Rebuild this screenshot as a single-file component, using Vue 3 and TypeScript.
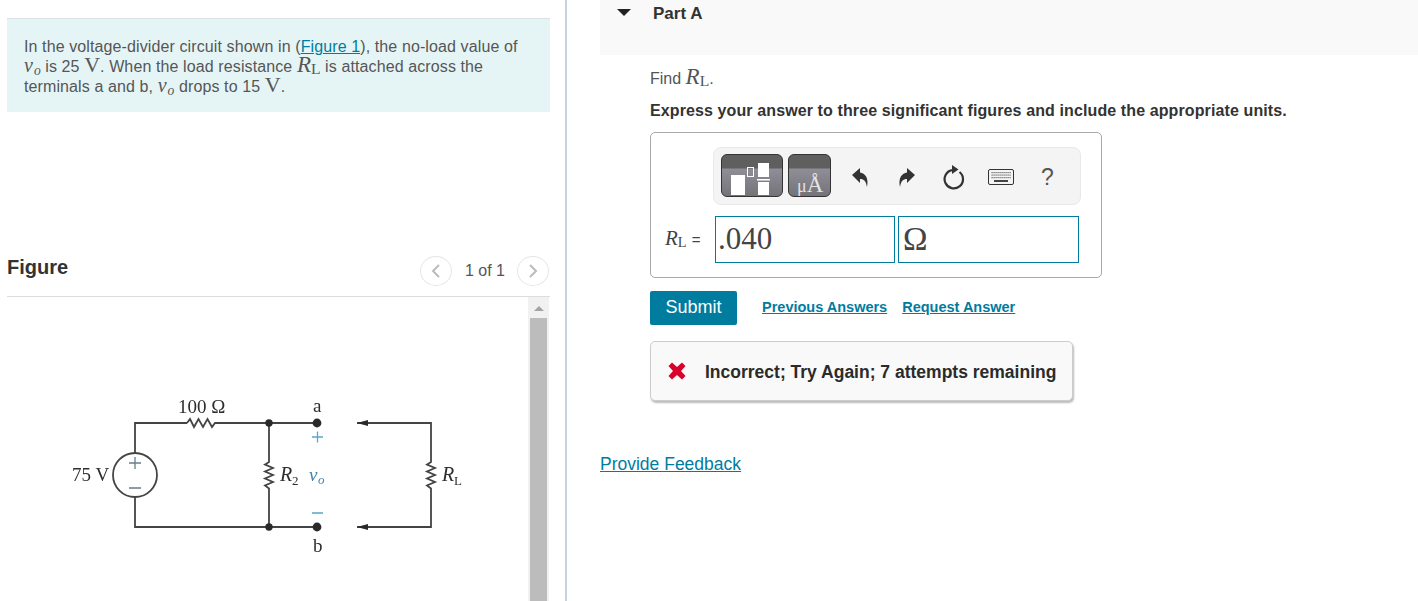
<script setup lang="ts">
const keyRows = [0, 1, 2]
const keyCols = [0, 1, 2, 3, 4, 5, 6, 7, 8, 9]
</script>

<template>
  <div class="page">
    <div class="left">
      <div class="intro">
        In the voltage-divider circuit shown in (<a class="link">Figure 1</a>), the no-load value of<br />
        <span class="mi">v<sub>o</sub></span> is 25 <span class="mn">V</span>. When the load resistance
        <span class="mi big">R<sub class="up">L</sub></span> is attached across the<br />
        terminals a and b, <span class="mi">v<sub>o</sub></span> drops to 15 <span class="mn">V</span>.
      </div>

      <div class="fig-head">
        <span class="fig-title">Figure</span>
        <div class="pager">
          <span class="pg-btn">
            <svg width="12" height="16" viewBox="0 0 12 16"><path d="M9 2 L3 8 L9 14" /></svg>
          </span>
          <span class="pg-text">1 of 1</span>
          <span class="pg-btn">
            <svg width="12" height="16" viewBox="0 0 12 16"><path d="M3 2 L9 8 L3 14" /></svg>
          </span>
        </div>
      </div>

      <div class="fig-body">
        <svg class="circuit" viewBox="7 297 521 304" width="521" height="304">
          <g class="wire">
            <path d="M135 453 V423 H187 M217 423 H317 M135 497 V527 H317" />
            <path d="M187 423 l3 -4 l4 8 l4.500 -8 l4.500 8 l4.500 -8 l4.500 8 l3 -4 h2" />
            <path d="M269 423 V462 l-4 2.500 l8 3.500 l-8 3.500 l8 3.500 l-8 3.500 l8 3.500 l-8 3.500 l4 3 V527" />
            <path d="M357 423 H431 V462 l-4 2.500 l8 3.500 l-8 3.500 l8 3.500 l-8 3.500 l8 3.500 l-8 3.500 l4 3 V527 H357" />
            <circle cx="135" cy="475" r="22" />
          </g>
          <g class="dots">
            <circle cx="269" cy="423" r="3.700" />
            <circle cx="317" cy="423" r="4.400" />
            <circle cx="269" cy="527" r="3.700" />
            <circle cx="317" cy="527" r="4.400" />
            <path d="M357 423 L368 420 V426 Z" />
            <path d="M357 527 L368 524 V530 Z" />
          </g>
          <path class="blue" d="M312 437 H323 M317.500 431.500 V442.500 M312 513 H323" />
          <path class="thin" d="M129 463 H141 M135 457 V469 M129 488 H141" />
          <g class="serif">
            <text x="178" y="413">100 Ω</text>
            <text x="313" y="412">a</text>
            <text x="313" y="552">b</text>
            <text x="72" y="481">75 V</text>
            <text x="280" y="481" font-style="italic" class="sym">R</text>
            <text x="292" y="485" class="small">2</text>
            <text x="442" y="481" font-style="italic" class="sym">R</text>
            <text x="454" y="485" class="small">L</text>
            <text x="309" y="481" font-style="italic" class="vo">v</text>
            <text x="318" y="484" font-style="italic" class="small vo">o</text>
          </g>
        </svg>
        <div class="scrollbar">
          <span class="sb-arrow"></span>
          <div class="sb-thumb"></div>
        </div>
      </div>
    </div>

    <div class="right">
      <div class="part-head">
        <span class="caret"></span>
        <span class="part-title">Part A</span>
      </div>

      <div class="part-body">
        <p class="find">Find <span class="mi big">R<sub class="up">L</sub></span>.</p>
        <p class="express">Express your answer to three significant figures and include the appropriate units.</p>

        <div class="answer">
          <div class="toolbar">
            <span class="tool tool-a">
              <svg width="60" height="41" viewBox="0 0 60 41">
                <rect x="9" y="20" width="14" height="20" fill="#fff" />
                <rect x="25.500" y="12.500" width="6" height="9" fill="none" stroke="#fff" />
                <rect x="36" y="8" width="11" height="14" fill="#fff" />
                <rect x="35" y="24" width="13" height="1.500" fill="#fff" />
                <rect x="36" y="27" width="11" height="13" fill="#fff" />
              </svg>
            </span>
            <span class="tool tool-b"><span class="mu">μ<span class="aa">Å</span></span></span>
            <span class="icon">
              <svg width="18" height="20" viewBox="0 0 18 20"><path d="M1 8 L9 1 V5.500 C14 6 18 11 16 20 C15 14 13 12 9 12 V16 Z" /></svg>
            </span>
            <span class="icon">
              <svg width="18" height="20" viewBox="0 0 18 20"><path d="M17 8 L9 1 V5.500 C4 6 0 11 2 20 C3 14 5 12 9 12 V16 Z" /></svg>
            </span>
            <span class="icon">
              <svg width="22" height="25" viewBox="0 0 22 25">
                <path d="M9 5.200 A9.200 9.200 0 1 0 16.500 7" fill="none" stroke="#333" stroke-width="2.200" />
                <path d="M9 0 L15.500 4.500 L9 9 Z" />
              </svg>
            </span>
            <span class="icon">
              <svg width="26" height="16" viewBox="0 0 26 16">
                <rect x="0.500" y="0.500" width="25" height="15" rx="1.500" fill="#f4f4f4" stroke="#333" />
                <g v-for="r in keyRows" :key="r">
                  <rect v-for="c in keyCols" :key="c" :x="3.500 + c * 2" :y="3 + r * 2.500" width="1.200" height="1.200" fill="#666" />
                </g>
                <rect x="6" y="11" width="14" height="2" fill="#444" />
              </svg>
            </span>
            <span class="icon help">?</span>
          </div>

          <div class="answer-row">
            <span class="ans-label"><span class="mi">R<sub class="up">L</sub></span> =</span>
            <div class="field field-a">.040</div>
            <div class="field field-b">Ω</div>
          </div>
        </div>

        <div class="actions">
          <span class="submit">Submit</span>
          <a class="link act first">Previous Answers</a>
          <a class="link act">Request Answer</a>
        </div>

        <div class="result">
          <svg width="18" height="18" viewBox="0 0 18 18">
            <path d="M4 0.500 L9 5 L14 0.500 L17.500 4 L13 9 L17.500 14 L14 17.500 L9 13 L4 17.500 L0.500 14 L5 9 L0.500 4 Z" fill="#d9002b" />
          </svg>
          <span>Incorrect; Try Again; 7 attempts remaining</span>
        </div>
      </div>

      <a class="link feedback">Provide Feedback</a>
    </div>
  </div>
</template>

<style>
html,
body {
  margin: 0;
  background: #fff;
  overflow: hidden;
}
</style>

<style scoped>
.page {
  display: flex;
  width: 1418px;
  height: 601px;
  overflow: hidden;
  font-family: "Liberation Sans", Arial, sans-serif;
  font-size: 16px;
  color: #444;
}

.left {
  width: 543px;
  margin-left: 7px;
  padding-right: 15px;
  border-right: 2px solid #c4d4e2;
  flex: none;
}

.link {
  color: #007c9f;
  text-decoration: underline;
}

.intro {
  margin-top: 18px;
  padding: 18px 17px 15px;
  height: 60px;
  background: #e5f5f6;
  border-top: 1px solid #d9e1e4;
  line-height: 20px;
  letter-spacing: 0.11px;
  color: #565656;
}

.mi {
  font-family: "Liberation Serif", "DejaVu Serif", serif;
  font-style: italic;
  font-size: 20px;
  line-height: 0;
  letter-spacing: 0;
}

.mi.big {
  font-size: 23px;
}

.mn {
  font-family: "Liberation Serif", "DejaVu Serif", serif;
  font-size: 22px;
  line-height: 0;
  letter-spacing: 0;
}

sub {
  font-size: 68%;
  line-height: 0;
  vertical-align: -3px;
  margin-left: 1px;
}

sub.up {
  font-style: normal;
  margin-left: 0;
  vertical-align: -2px;
}

.fig-head {
  display: flex;
  align-items: center;
  justify-content: space-between;
  height: 56px;
  margin-top: 129px;
  border-bottom: 1px solid #ddd;
  box-sizing: border-box;
}

.fig-title {
  margin-top: -2px;
  font-weight: bold;
  font-size: 20px;
  color: #333;
}

.pager {
  display: flex;
  align-items: center;
  margin-top: 5px;
  margin-right: 1px;
}

.pg-btn {
  display: flex;
  align-items: center;
  justify-content: center;
  width: 32px;
  height: 30px;
  border: 1px solid #e6e6e6;
  border-radius: 50%;
  box-sizing: border-box;
}

.pg-btn path {
  fill: none;
  stroke: #bbb;
  stroke-width: 2;
}

.pg-text {
  margin: 0 12px 0 13px;
  color: #555;
}

.fig-body {
  display: flex;
  height: 304px;
}

.circuit {
  display: block;
  flex: none;
  filter: blur(0.4px);
}

.wire path,
.wire circle {
  fill: none;
  stroke: #444;
  stroke-width: 1.800;
}

.dots {
  fill: #2a2a2a;
}

.blue {
  fill: none;
  stroke: #5aa7c4;
  stroke-width: 1.300;
}

.thin {
  fill: none;
  stroke: #667e8c;
  stroke-width: 1.300;
}

.serif text {
  font-family: "Liberation Serif", serif;
  font-size: 19px;
  fill: #2e2e2e;
}

.serif .sym {
  font-size: 20px;
}

.serif .small {
  font-size: 13px;
}

.serif .vo {
  fill: #4385a8;
}

.scrollbar {
  width: 21px;
  background: #f1f1f1;
  display: flex;
  flex-direction: column;
  align-items: center;
}

.sb-arrow {
  width: 0;
  height: 0;
  margin-top: 9px;
  border-left: 5px solid transparent;
  border-right: 5px solid transparent;
  border-bottom: 5px solid #a3a3a3;
}

.sb-thumb {
  width: 17px;
  flex: 1;
  margin-top: 7px;
  background: #bcbcbc;
}

.right {
  flex: 1;
  margin-left: 33px;
}

.part-head {
  display: flex;
  height: 55px;
  background: #f9f9f9;
  padding-left: 17px;
  box-sizing: border-box;
}

.caret {
  width: 0;
  height: 0;
  margin-top: 9px;
  border-left: 7.500px solid transparent;
  border-right: 7.500px solid transparent;
  border-top: 7px solid #222;
}

.part-title {
  margin-left: 22px;
  margin-top: 4px;
  font-size: 17px;
  font-weight: bold;
  color: #333;
  line-height: 20px;
}

.part-body {
  padding-left: 50px;
}

.find {
  margin: 14px 0 0;
  line-height: 20px;
  color: #555;
}

.express {
  margin: 12px 0 0;
  line-height: 20px;
  font-weight: bold;
  letter-spacing: 0.11px;
  color: #333;
}

.answer {
  width: 452px;
  height: 146px;
  margin-top: 11px;
  padding: 14px 0 0;
  border: 1px solid #aaa;
  border-radius: 5px;
  box-sizing: border-box;
}

.toolbar {
  display: flex;
  align-items: flex-start;
  width: 368px;
  height: 58px;
  margin-left: 62px;
  padding: 6px 0 0 7px;
  background: #f4f4f4;
  border: 1px solid #e9e9e9;
  border-radius: 8px;
  box-sizing: border-box;
}

.tool {
  display: block;
  height: 43px;
  border: 1px solid #333;
  border-radius: 6px;
  box-sizing: border-box;
  background: linear-gradient(#5f5f5f 0, #5f5f5f 13px, #8f8d96 14px, #75737a 100%);
  overflow: hidden;
  flex: none;
}

.tool-a {
  width: 62px;
}

.tool-a svg {
  display: block;
}

.tool-b {
  position: relative;
  width: 43px;
  margin-left: 5px;
  margin-right: 5px;
}

.mu {
  position: absolute;
  left: 8px;
  bottom: -2px;
  font-family: "Liberation Serif", serif;
  font-size: 18px;
  line-height: 24px;
  color: #e4e4e4;
}

.aa {
  font-size: 23px;
}

.icon {
  display: flex;
  align-items: center;
  justify-content: center;
  width: 47px;
  height: 46px;
  flex: none;
}

.icon path {
  fill: #333;
}

.icon path[fill="none"] {
  fill: none;
}

.help {
  font-size: 23px;
  color: #555;
}

.answer-row {
  display: flex;
  align-items: center;
  margin-top: 11px;
  padding-left: 14px;
}

.ans-label {
  width: 50px;
  color: #444;
  font-size: 15px;
  white-space: nowrap;
}

.ans-label .mi {
  font-size: 21px;
  margin-right: 1px;
}

.field {
  height: 47px;
  box-sizing: border-box;
  border: 1px solid #007c9f;
  font-family: "Liberation Serif", serif;
  font-size: 31px;
  line-height: 44px;
  padding-left: 2px;
  color: #444;
}

.field-a {
  width: 180px;
  margin-right: 3px;
}

.field-b {
  width: 181px;
  padding-left: 4px;
  font-size: 33px;
}

.actions {
  display: flex;
  align-items: center;
  margin-top: 13px;
}

.submit {
  width: 87px;
  height: 34px;
  line-height: 32px;
  text-align: center;
  color: #fff;
  font-size: 18px;
  background: #007c9f;
  border-radius: 2px;
}

.act {
  font-weight: bold;
  font-size: 14.500px;
  margin-left: 15px;
  margin-bottom: 2px;
}

.act.first {
  margin-left: 25px;
}

.result {
  display: flex;
  align-items: center;
  width: 423px;
  height: 60px;
  margin-top: 16px;
  padding-left: 17px;
  padding-top: 3px;
  background: #f9f9f9;
  border: 1px solid #ccc;
  border-radius: 5px;
  box-sizing: border-box;
  box-shadow: 1px 2px 2px #bbb;
  font-weight: bold;
  font-size: 17.500px;
  color: #2b2b2b;
}

.result svg {
  margin-top: -3px;
}

.result span {
  margin-left: 19px;
}

.feedback {
  display: block;
  width: max-content;
  margin-top: 53px;
  font-size: 17.500px;
}
</style>
